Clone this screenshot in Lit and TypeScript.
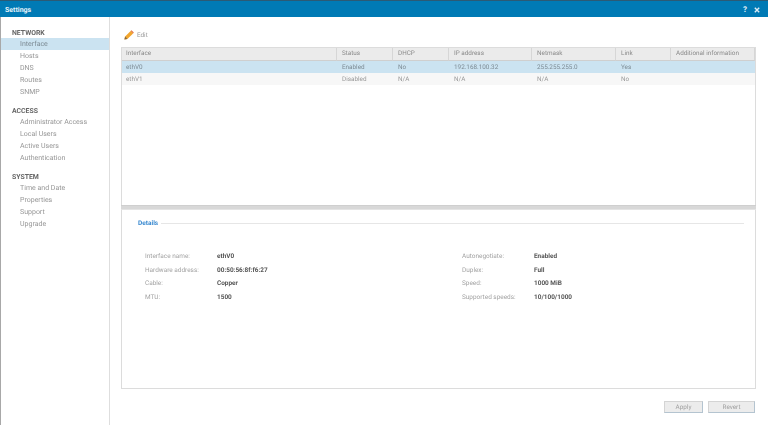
import { LitElement, html, css } from "lit";
import { customElement } from "lit/decorators.js";

const NAV = [
  { title: "NETWORK", items: ["Interface", "Hosts", "DNS", "Routes", "SNMP"] },
  { title: "ACCESS", items: ["Administrator Access", "Local Users", "Active Users", "Authentication"] },
  { title: "SYSTEM", items: ["Time and Date", "Properties", "Support", "Upgrade"] },
];
const HEAD = ["Interface", "Status", "DHCP", "IP address", "Netmask", "Link", "Additional information"];
const ROWS = [
  ["ethV0", "Enabled", "No", "192.168.100.32", "255.255.255.0", "Yes", ""],
  ["ethV1", "Disabled", "N/A", "N/A", "N/A", "No", ""],
];
const LEFT = [["Interface name:", "ethV0"], ["Hardware address:", "00:50:56:8f:f6:27"], ["Cable:", "Copper"], ["MTU:", "1500"]];
const RIGHT = [["Autonegotiate:", "Enabled"], ["Duplex:", "Full"], ["Speed:", "1000 MiB"], ["Supported speeds:", "10/100/1000"]];

@customElement("app-root")
export class AppRoot extends LitElement {
  static styles = css`
    :host { display: block; width: 768px; height: 425px; overflow: hidden; background: #fff;
      font-family: Roboto, "Liberation Sans", sans-serif; font-size: 7px; color: #8a8a8a; text-rendering: geometricPrecision; }
    .wrap { display: flex; flex-direction: column; height: 425px; filter: blur(0.4px); }
    .strip { height: 1px; background: #2b5a75; flex: none; }
    .title { height: 16px; flex: none; background: #007ab5; color: #e6f3fa; display: flex; align-items: center;
      justify-content: space-between; padding: 1px 8px 0 5px; box-sizing: border-box; font-weight: 700; font-size: 7px; }
    .ctl { display: flex; gap: 7px; align-items: center; font-size: 8px; font-weight: 700; }
    .ctl svg { display: block; }
    .body { flex: 1; display: flex; min-height: 0; border-left: 1px solid #a8a8a8; }
    .side { width: 108px; flex: none; border-right: 1px solid #dedede; padding-top: 11px; }
    .grp { margin-bottom: 8px; }
    .grp h4 { margin: 0; height: 10px; line-height: 10px; padding-left: 11px; font-size: 6.9px; font-weight: 700; color: #666; }
    .item { height: 12px; line-height: 13px; padding-left: 19px; color: #979797; }
    .item.sel { background: #cbe3f1; color: #7d8b94; }
    .main { flex: 1; display: flex; flex-direction: column; padding: 7px 12px 12px 11px; min-width: 0; font-size: 6.35px; }
    .tb { height: 23px; flex: none; display: flex; align-items: center; gap: 3px; padding: 0 0 1px 3px; box-sizing: border-box; color: #999; }
    .panel { border: 1px solid #dcdcdc; border-bottom: none; flex: none; height: 158px; box-sizing: border-box; }
    .grid { display: grid; grid-template-columns: 215px 56px 56px 83px 84px 55px 1fr; }
    .th { height: 12px; line-height: 11px; padding-left: 5px; background: #ebebeb; border-right: 1px solid #d6d6d6;
      border-bottom: 1px solid #cfcfcf; color: #8a8a8a; }
    .th:last-child { border-right: none; }
    .td { height: 12px; line-height: 12px; padding-left: 5px; }
    .th:first-child, .td:nth-child(7n + 1) { padding-left: 4px; }
    .r0 { background: #cbe3f1; color: #7d8b94; }
    .r1 { background: #f7f7f7; color: #999; }
    .split { height: 5px; flex: none; background: #d8d8d8; border-top: 1px solid #cfcfcf; border-bottom: 1px solid #e4e4e4; box-sizing: border-box; }
    .details { flex: 1; border: 1px solid #dcdcdc; border-top: none; padding: 8px 11px 0 16px; min-height: 0; }
    .dh { display: flex; align-items: center; gap: 3px; height: 10px; color: #3a8ad0; font-weight: 700; font-size: 6.5px; }
    .dh i { flex: 1; height: 1px; background: #e6e6e6; }
    .cols { display: grid; grid-template-columns: 317px 1fr; margin-top: 21px; padding-left: 7px; }
    .kv { display: grid; grid-template-columns: 72px 1fr; grid-auto-rows: 13.67px; line-height: 14px; font-size: 6.45px; }
    .k { color: #a3a3a3; }
    .v { color: #555; font-weight: 700; }
    .foot { height: 24px; flex: none; display: flex; justify-content: flex-end; gap: 5px; align-items: flex-end; padding-right: 1px; }
    .btn { width: 39px; height: 12px; line-height: 11px; text-align: center; background: #ececec; color: #a0a0a0;
      border: 1px solid #d4d4d4; border-right-color: #b4c4d0; border-bottom-color: #b4c4d0; box-sizing: border-box; }
    .btn.r { width: 47px; }
  `;

  render() {
    return html`<div class="wrap">
      <div class="strip"></div>
      <div class="title"><span>Settings</span>
        <span class="ctl"><span>?</span>
          <svg width="6" height="6" viewBox="0 0 6 6"><path d="M.8.8l4.4 4.4M5.2.8L.8 5.2" stroke="#dcecf5" stroke-width="1.4"/></svg>
        </span>
      </div>
      <div class="body">
        <nav class="side">
          ${NAV.map(g => html`<div class="grp"><h4>${g.title}</h4>
            ${g.items.map(i => html`<div class="item ${i === "Interface" ? "sel" : ""}">${i}</div>`)}</div>`)}
        </nav>
        <div class="main">
          <div class="tb">
            <svg width="10" height="10" viewBox="0 0 10 10">
              <path d="M.4 9.6l.7-3L6.6.9l2.5 2.5L3.4 8.9z" fill="#f2a62e"/>
              <path d="M6.6.9l.9-.7 2.3 2.3-.7.9z" fill="#e2703c"/>
              <path d="M.4 9.6l.7-3 2.3 2.3z" fill="#8a6a40"/>
            </svg>
            <span>Edit</span>
          </div>
          <div class="panel">
            <div class="grid">
              ${HEAD.map(h => html`<div class="th">${h}</div>`)}
              ${ROWS.map((r, n) => r.map(c => html`<div class="td r${n}">${c}</div>`))}
            </div>
          </div>
          <div class="split"></div>
          <div class="details">
            <div class="dh"><span>Details</span><i></i></div>
            <div class="cols">
              ${[LEFT, RIGHT].map(col => html`<div class="kv">
                ${col.map(([k, v]) => html`<span class="k">${k}</span><span class="v">${v}</span>`)}
              </div>`)}
            </div>
          </div>
          <div class="foot">
            <div class="btn">Apply</div>
            <div class="btn r">Revert</div>
          </div>
        </div>
      </div>
    </div>`;
  }
}
